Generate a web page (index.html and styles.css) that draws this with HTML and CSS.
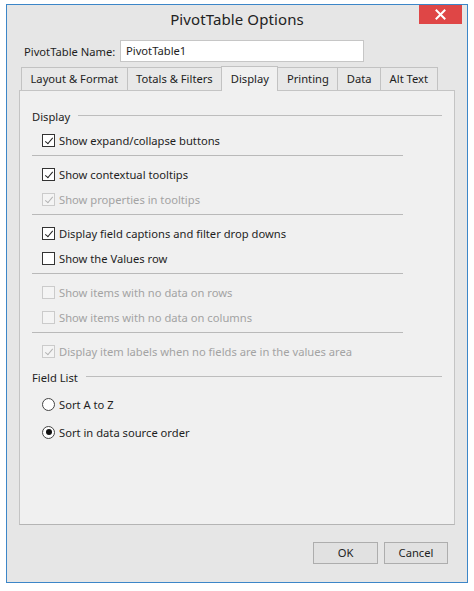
FILE: index.html
```html
<!DOCTYPE html>
<html>
<head>
<meta charset="utf-8">
<link rel="stylesheet" href="styles.css">
</head>
<body>
<div class="window">
  <div class="titlebar">
    <div class="title">PivotTable Options</div>
    <div class="close">
      <svg width="11" height="11" viewBox="0 0 11 11"><path d="M1.5 1.5 L9.5 9.5 M9.5 1.5 L1.5 9.5" stroke="#fff" stroke-width="2" stroke-linecap="square"/></svg>
    </div>
  </div>
  <div class="name-row">
    <span class="name-label">PivotTable Name:</span>
    <div class="name-input">PivotTable1</div>
  </div>
  <div class="tabs">
    <div class="tab">Layout &amp; Format</div>
    <div class="tab">Totals &amp; Filters</div>
    <div class="tab active">Display</div>
    <div class="tab">Printing</div>
    <div class="tab">Data</div>
    <div class="tab">Alt Text</div>
  </div>
  <div class="panel">
    <div class="group-head"><span>Display</span><span class="rule"></span></div>
    <div class="row"><span class="cb checked"></span>Show expand/collapse buttons</div>
    <div class="sep"></div>
    <div class="row"><span class="cb checked"></span>Show contextual tooltips</div>
    <div class="row disabled"><span class="cb checked"></span>Show properties in tooltips</div>
    <div class="sep"></div>
    <div class="row"><span class="cb checked"></span>Display field captions and filter drop downs</div>
    <div class="row"><span class="cb"></span>Show the Values row</div>
    <div class="sep"></div>
    <div class="row disabled"><span class="cb"></span>Show items with no data on rows</div>
    <div class="row disabled"><span class="cb"></span>Show items with no data on columns</div>
    <div class="sep"></div>
    <div class="row disabled"><span class="cb checked"></span>Display item labels when no fields are in the values area</div>
    <div class="group-head field-head"><span>Field List</span><span class="rule"></span></div>
    <div class="row radio-row first"><span class="radio"></span>Sort A to Z</div>
    <div class="row radio-row"><span class="radio on"></span>Sort in data source order</div>
  </div>
  <div class="buttons">
    <div class="btn">OK</div>
    <div class="btn">Cancel</div>
  </div>
</div>
</body>
</html>
```

FILE: styles.css
```css
html, body {
  margin: 0;
  padding: 0;
  background: #ffffff;
}
body {
  font-family: "Noto Sans", "Open Sans", sans-serif;
  font-size: 11.2px;
  color: #1e1e1e;
}
.window {
  margin: 4px 0 0 6px;
  width: 462px;
  height: 579px;
  box-sizing: border-box;
  border: 1px solid #3c86c8;
  background: #e6e6e6;
  display: flex;
  flex-direction: column;
  position: relative;
}
.titlebar {
  height: 28px;
  display: flex;
  align-items: center;
  justify-content: center;
}
.title {
  font-size: 15px;
  color: #222;
  letter-spacing: 0.1px;
}
.close {
  position: absolute;
  top: 0;
  right: 5px;
  width: 43px;
  height: 19px;
  background: #df4646;
  display: flex;
  align-items: center;
  justify-content: center;
}
.name-row {
  margin-top: 7px;
  padding-left: 17px;
  display: flex;
  align-items: center;
  height: 22px;
}
.name-label {
  width: 96px;
}
.name-input {
  width: 244px;
  height: 22px;
  box-sizing: border-box;
  border: 1px solid #c6c6c6;
  background: #fff;
  padding-left: 5px;
  line-height: 20px;
}
.tabs {
  margin-top: 4px;
  padding-left: 14px;
  display: flex;
  align-items: flex-end;
  height: 24px;
  position: relative;
  z-index: 1;
}
.tab {
  height: 23px;
  box-sizing: border-box;
  border: 1px solid #c2c2c2;
  border-bottom: none;
  border-left: none;
  background: #e8e8e8;
  padding: 0 8.5px;
  line-height: 22px;
  color: #222;
}
.tab:first-child {
  border-left: 1px solid #c2c2c2;
}
.tab.active {
  height: 25px;
  margin-bottom: -1px;
  background: #f0f0f0;
  border-left: 1px solid #c2c2c2;
  margin-left: -1px;
  line-height: 24px;
}
.panel {
  margin-left: 12px;
  width: 436px;
  height: 435px;
  box-sizing: border-box;
  border: 1px solid #c4c4c4;
  border-bottom-color: #b4b4b4;
  background: #f0f0f0;
  padding: 15px 12px 0 12px;
  display: flex;
  flex-direction: column;
}
.group-head {
  height: 20px;
  display: flex;
  align-items: center;
  gap: 8px;
  color: #222;
}
.rule {
  flex: 1;
  height: 1px;
  background: #bdbdbd;
  margin-top: -2px;
}
.row {
  height: 25px;
  display: flex;
  align-items: center;
  padding-left: 10px;
  color: #1e1e1e;
}
.group-head + .row {
  margin-top: 2px;
}
.sep {
  width: 371px;
  height: 1px;
  background: #b9b9b9;
  margin: 2px 0 6px 0;
}
.cb {
  width: 13px;
  height: 13px;
  box-sizing: border-box;
  border: 1px solid #333;
  background: #fff;
  margin-right: 4px;
  position: relative;
  flex: none;
}
.cb.checked::after {
  content: "";
  position: absolute;
  left: 3.5px;
  top: 0.5px;
  width: 3px;
  height: 7px;
  border: solid #222;
  border-width: 0 1.6px 1.6px 0;
  transform: rotate(40deg);
}
.row.disabled {
  color: #a3a3a3;
}
.row.disabled .cb {
  border-color: #cbcbcb;
  background: #f4f4f4;
}
.row.disabled .cb.checked::after {
  border-color: #b3b3b3;
}
.field-head {
  margin-top: 3px;
}
.radio-row {
  height: 28px;
}
.radio-row.first {
  margin-top: 3px;
}
.radio {
  width: 13px;
  height: 13px;
  box-sizing: border-box;
  border: 1px solid #444;
  border-radius: 50%;
  background: #fff;
  margin-right: 4px;
  position: relative;
  flex: none;
}
.radio.on::after {
  content: "";
  position: absolute;
  left: 2.5px;
  top: 2.5px;
  width: 6px;
  height: 6px;
  border-radius: 50%;
  background: #111;
}
.buttons {
  margin-top: 17px;
  padding-right: 19px;
  display: flex;
  justify-content: flex-end;
  gap: 6px;
}
.btn {
  width: 65px;
  height: 22px;
  box-sizing: border-box;
  border: 1px solid #adadad;
  background: #e1e1e1;
  text-align: center;
  line-height: 20px;
  color: #1e1e1e;
}
.btn + .btn {
  width: 64px;
}
```
